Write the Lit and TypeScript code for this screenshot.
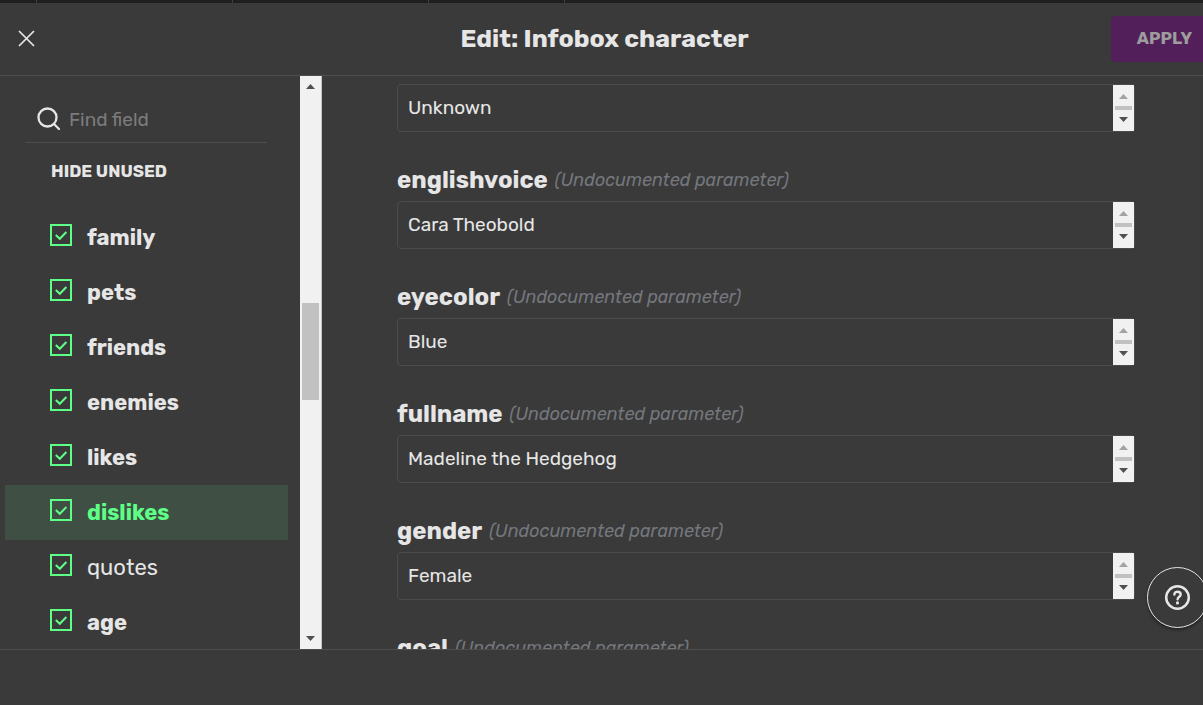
import { LitElement, html, css } from "lit";
import { customElement, property } from "lit/decorators.js";
import { classMap } from "lit/directives/class-map.js";

interface Param {
  name: string;
  required?: boolean;
  active?: boolean;
}

interface Field {
  name: string;
  value: string;
}

const PARAMS: Param[] = [
  { name: "family", required: true },
  { name: "pets", required: true },
  { name: "friends", required: true },
  { name: "enemies", required: true },
  { name: "likes", required: true },
  { name: "dislikes", required: true, active: true },
  { name: "quotes" },
  { name: "age", required: true },
];

const FIELDS: Field[] = [
  { name: "englishvoice", value: "Cara Theobold" },
  { name: "eyecolor", value: "Blue" },
  { name: "fullname", value: "Madeline the Hedgehog" },
  { name: "gender", value: "Female" },
  { name: "goal", value: "" },
];

const FONT = css`Rubik, Inter, Roboto, sans-serif`;

/** Light scroll track with an arrow at each end and a thumb between. */
@customElement("scroll-track")
export class ScrollTrack extends LitElement {
  @property({ type: Boolean, reflect: true }) compact = false;

  static styles = css`
    :host {
      box-sizing: border-box;
      display: flex;
      flex-direction: column;
      align-items: stretch;
      width: 22px;
      padding: 8px 2px;
      background: #f1f1f1;
      border-right: 1px solid #c4c4c4;
    }
    :host([compact]) {
      width: 21px;
      padding: 9px 2px;
      border-right: 0;
    }
    svg {
      display: block;
      align-self: center;
      width: 9px;
      height: 5px;
      fill: #505050;
      flex: none;
    }
    .before {
      flex: 214;
    }
    .after {
      flex: 236;
    }
    .thumb {
      flex: 97;
      background: #c1c1c1;
    }
    :host([compact]) .thumb {
      flex: 0 0 4px;
    }
    :host([compact]) .before,
    :host([compact]) .after {
      flex: 1;
    }
    :host([compact]) .up {
      fill: #a3a3a3;
    }
  `;

  render() {
    return html`
      <svg class="up" viewBox="0 0 9 5"><path d="M4.5 0 9 5H0z" /></svg>
      <div class="before"></div>
      <div class="thumb"></div>
      <div class="after"></div>
      <svg viewBox="0 0 9 5"><path d="M0 0h9L4.5 5z" /></svg>
    `;
  }
}

/** Bordered text area with its own scroll track. */
@customElement("text-field")
export class TextField extends LitElement {
  @property() name = "";
  @property() value = "";
  @property({ type: Boolean }) unlabelled = false;

  static styles = css`
    :host {
      display: block;
      font-family: ${FONT};
    }
    .head {
      display: flex;
      align-items: center;
      gap: 7px;
      height: 30px;
      margin-bottom: 6px;
      white-space: nowrap;
    }
    .name {
      font-size: 24px;
      line-height: 30px;
      font-weight: 700;
      color: #e6e6e6;
    }
    .hint {
      font-size: 18px;
      line-height: 30px;
      font-style: italic;
      font-weight: 400;
      color: #74777d;
    }
    .box {
      display: flex;
      height: 46px;
      border: 1px solid #4c4c4c;
      border-radius: 4px;
    }
    textarea {
      flex: 1;
      min-width: 0;
      box-sizing: border-box;
      height: 46px;
      padding: 10px;
      border: 0;
      outline: 0;
      resize: none;
      overflow: hidden;
      background: transparent;
      font-family: ${FONT};
      font-size: 19px;
      line-height: 26px;
      color: #e6e6e6;
    }
  `;

  render() {
    return html`
      ${this.unlabelled
        ? null
        : html`<div class="head">
            <label class="name" for="value">${this.name}</label>
            <span class="hint">(Undocumented parameter)</span>
          </div>`}
      <div class="box">
        <textarea
          id="value"
          rows="1"
          aria-label=${this.name}
          .value=${this.value}
        ></textarea>
        <scroll-track compact></scroll-track>
      </div>
    `;
  }
}

@customElement("app-root")
export class AppRoot extends LitElement {
  static styles = css`
    :host {
      display: flex;
      flex-direction: column;
      position: relative;
      height: 100vh;
      overflow: hidden;
      background: #3a3a3a;
      color: #e6e6e6;
      font-family: ${FONT};
    }
    button {
      margin: 0;
      border: 0;
      background: none;
      color: inherit;
      font-family: inherit;
      cursor: pointer;
    }
    .strip {
      display: grid;
      grid-template-columns: 36px 195px 195px 135px;
      column-gap: 1px;
      flex: none;
      height: 3px;
      background: #1f1f1f;
    }
    .strip span {
      box-shadow: 1px 0 #3f3f3f;
    }
    header {
      display: grid;
      grid-template-columns: 1fr auto 1fr;
      align-items: center;
      flex: none;
      height: 72px;
      padding-left: 6px;
      border-bottom: 1px solid #4e4e4e;
    }
    .close {
      justify-self: start;
      display: flex;
      padding: 12px 12px 14px;
    }
    .close svg {
      width: 17px;
      height: 17px;
      fill: none;
      stroke: #e6e6e6;
      stroke-width: 1.7;
    }
    h1 {
      margin: 0;
      font-size: 25px;
      line-height: 30px;
      font-weight: 700;
    }
    .apply {
      justify-self: end;
      height: 46px;
      padding: 0 11px 3px 26px;
      border-radius: 4px 0 0 4px;
      background: #531f5b;
      color: #9d9d9d;
      font-size: 17px;
      line-height: 20px;
      font-weight: 700;
    }
    .body {
      display: flex;
      flex: 1;
      min-height: 0;
    }
    aside {
      display: flex;
      flex-direction: column;
      flex: none;
      width: 300px;
      overflow: hidden;
    }
    .search {
      display: flex;
      align-items: center;
      gap: 8px;
      flex: none;
      height: 46px;
      margin: 20px 33px 0 25px;
      padding-left: 12px;
      border-bottom: 1px solid #4e4e4e;
    }
    .search svg {
      flex: none;
      width: 24px;
      height: 24px;
      fill: none;
      stroke: #e6e6e6;
      stroke-width: 2.3;
      stroke-linecap: round;
    }
    .search input {
      flex: 1;
      min-width: 0;
      padding: 2px 0 0;
      border: 0;
      outline: 0;
      background: none;
      font-family: inherit;
      font-size: 19px;
      line-height: 26px;
      color: #e6e6e6;
    }
    .search input::placeholder {
      color: #7c7c7c;
      opacity: 1;
    }
    .toggle {
      align-self: flex-start;
      flex: none;
      height: 56px;
      margin: 0 0 11px 51px;
      padding: 0;
      font-size: 17px;
      line-height: 20px;
      font-weight: 700;
      white-space: nowrap;
    }
    ul {
      flex: none;
      margin: 0;
      padding: 0 12px 0 5px;
      list-style: none;
    }
    .item {
      display: flex;
      align-items: flex-start;
      gap: 15px;
      box-sizing: border-box;
      height: 55px;
      padding: 14px 0 0 45px;
      font-size: 22px;
      line-height: 28px;
    }
    .item.required {
      font-weight: 700;
    }
    .item.active {
      background: #404f44;
      color: #5eff87;
    }
    .tick {
      display: grid;
      flex: none;
    }
    .tick > * {
      grid-area: 1 / 1;
    }
    .tick input {
      appearance: none;
      box-sizing: border-box;
      width: 22px;
      height: 22px;
      margin: 0;
      border: 2px solid #5eff87;
    }
    .tick svg {
      width: 22px;
      height: 22px;
      fill: none;
      stroke: #5eff87;
      stroke-width: 2;
      pointer-events: none;
    }
    .tick input:not(:checked) + svg {
      visibility: hidden;
    }
    main {
      flex: 1;
      min-width: 0;
      display: flex;
      flex-direction: column;
      gap: 33px;
      padding: 8px 68px 0 75px;
      overflow: hidden;
    }
    main text-field {
      flex: none;
    }
    footer {
      flex: none;
      height: 55px;
      border-top: 1px solid #4e4e4e;
    }
    .help {
      position: absolute;
      right: -5px;
      bottom: 77px;
      display: flex;
      align-items: center;
      justify-content: center;
      box-sizing: border-box;
      width: 61px;
      height: 61px;
      padding: 0;
      border: 1px solid #e6e6e6;
      border-radius: 50%;
      background: #3a3a3a;
      box-shadow: 0 2px 3px rgba(0, 0, 0, 0.4);
    }
    .help svg {
      width: 27px;
      height: 27px;
      fill: none;
      stroke: #e6e6e6;
    }
  `;

  render() {
    return html`
      <div class="strip"><span></span><span></span><span></span><span></span></div>
      <header>
        <button class="close" aria-label="Close">
          <svg viewBox="0 0 17 17"><path d="M1 1l15 15M16 1L1 16" /></svg>
        </button>
        <h1>Edit: Infobox character</h1>
        <button class="apply">APPLY</button>
      </header>
      <div class="body">
        <aside>
          <label class="search">
            <svg viewBox="0 0 24 24">
              <circle cx="10.5" cy="10.5" r="9" />
              <path d="M17 17l5 5" />
            </svg>
            <input type="text" placeholder="Find field" aria-label="Find field" />
          </label>
          <button class="toggle">HIDE UNUSED</button>
          <ul>
            ${PARAMS.map(
              (p) => html`<li>
                <label
                  class=${classMap({
                    item: true,
                    required: !!p.required,
                    active: !!p.active,
                  })}
                >
                  <span class="tick">
                    <input type="checkbox" .checked=${true} />
                    <svg viewBox="0 0 22 22"><path d="M5.8 11l4 3.8 6.6-6.8" /></svg>
                  </span>
                  <span>${p.name}</span>
                </label>
              </li>`
            )}
          </ul>
        </aside>
        <scroll-track></scroll-track>
        <main>
          <text-field unlabelled name="voice" value="Unknown"></text-field>
          ${FIELDS.map(
            (f) => html`<text-field name=${f.name} value=${f.value}></text-field>`
          )}
        </main>
      </div>
      <footer></footer>
      <button class="help" aria-label="Help">
        <svg viewBox="0 0 27 27">
          <circle cx="13.5" cy="13.5" r="11.3" stroke-width="2.5" />
          <path
            d="M10.4 10.6c0-1.8 1.4-2.9 3.1-2.9s3.2 1.1 3.2 2.8c0 2.2-3.1 2.4-3.1 4.7"
            stroke-width="2.4"
            stroke-linecap="round"
          />
          <circle cx="13.5" cy="18.9" r="1.6" fill="#e6e6e6" stroke="none" />
        </svg>
      </button>
    `;
  }
}
